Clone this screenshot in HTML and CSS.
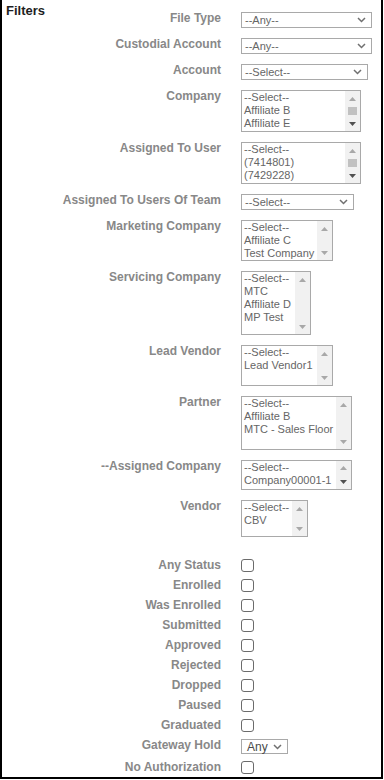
FILE: index.html
```html
<!DOCTYPE html>
<html lang="en">
<head>
    <meta charset="UTF-8">
    <meta name="viewport" content="width=device-width, initial-scale=1.0">
    <title>Filters</title>
    <link rel="stylesheet" href="styles.css">
</head>
<body>
<div class="panel">
    <h3 class="panel-title">Filters</h3>

    <div class="filter-grid">
        <label class="filter-label">File Type</label>
        <div class="dropdown dd-filetype"><span>--Any--</span><svg class="chevron" width="9" height="6" viewBox="0 0 9 6"><polyline points="1,1 4.5,4.5 8,1"/></svg></div>

        <label class="filter-label">Custodial Account</label>
        <div class="dropdown dd-custodial"><span>--Any--</span><svg class="chevron" width="9" height="6" viewBox="0 0 9 6"><polyline points="1,1 4.5,4.5 8,1"/></svg></div>

        <label class="filter-label">Account</label>
        <div class="dropdown dd-account"><span>--Select--</span><svg class="chevron" width="9" height="6" viewBox="0 0 9 6"><polyline points="1,1 4.5,4.5 8,1"/></svg></div>

        <label class="filter-label">Company</label>
        <div class="listbox lb-company">
            <ul><li>--Select--</li><li>Affiliate B</li><li>Affiliate E</li></ul>
            <div class="scrollbar">
                <span class="sb-btn"><svg width="7" height="4"><polygon points="0,4 3.5,0 7,4" class="off"/></svg></span>
                <span class="sb-track"><span class="sb-thumb"></span></span>
                <span class="sb-btn"><svg width="7" height="4"><polygon points="0,0 7,0 3.5,4" class="on"/></svg></span>
            </div>
        </div>

        <label class="filter-label">Assigned To User</label>
        <div class="listbox lb-user">
            <ul><li>--Select--</li><li>(7414801)</li><li>(7429228)</li></ul>
            <div class="scrollbar">
                <span class="sb-btn"><svg width="7" height="4"><polygon points="0,4 3.5,0 7,4" class="off"/></svg></span>
                <span class="sb-track"><span class="sb-thumb"></span></span>
                <span class="sb-btn"><svg width="7" height="4"><polygon points="0,0 7,0 3.5,4" class="on"/></svg></span>
            </div>
        </div>

        <label class="filter-label">Assigned To Users Of Team</label>
        <div class="dropdown dd-team"><span>--Select--</span><svg class="chevron" width="9" height="6" viewBox="0 0 9 6"><polyline points="1,1 4.5,4.5 8,1"/></svg></div>

        <label class="filter-label">Marketing Company</label>
        <div class="listbox lb-marketing">
            <ul><li>--Select--</li><li>Affiliate C</li><li>Test Company</li></ul>
            <div class="scrollbar">
                <span class="sb-btn"><svg width="7" height="4"><polygon points="0,4 3.5,0 7,4" class="off"/></svg></span>
                <span class="sb-track"></span>
                <span class="sb-btn"><svg width="7" height="4"><polygon points="0,0 7,0 3.5,4" class="off"/></svg></span>
            </div>
        </div>

        <label class="filter-label">Servicing Company</label>
        <div class="listbox lb-servicing">
            <ul><li>--Select--</li><li>MTC</li><li>Affiliate D</li><li>MP Test</li></ul>
            <div class="scrollbar">
                <span class="sb-btn"><svg width="7" height="4"><polygon points="0,4 3.5,0 7,4" class="off"/></svg></span>
                <span class="sb-track"></span>
                <span class="sb-btn"><svg width="7" height="4"><polygon points="0,0 7,0 3.5,4" class="off"/></svg></span>
            </div>
        </div>

        <label class="filter-label">Lead Vendor</label>
        <div class="listbox lb-leadvendor">
            <ul><li>--Select--</li><li>Lead Vendor1</li></ul>
            <div class="scrollbar">
                <span class="sb-btn"><svg width="7" height="4"><polygon points="0,4 3.5,0 7,4" class="off"/></svg></span>
                <span class="sb-track"></span>
                <span class="sb-btn"><svg width="7" height="4"><polygon points="0,0 7,0 3.5,4" class="off"/></svg></span>
            </div>
        </div>

        <label class="filter-label">Partner</label>
        <div class="listbox lb-partner">
            <ul><li>--Select--</li><li>Affiliate B</li><li>MTC - Sales Floor</li></ul>
            <div class="scrollbar">
                <span class="sb-btn"><svg width="7" height="4"><polygon points="0,4 3.5,0 7,4" class="off"/></svg></span>
                <span class="sb-track"></span>
                <span class="sb-btn"><svg width="7" height="4"><polygon points="0,0 7,0 3.5,4" class="off"/></svg></span>
            </div>
        </div>

        <label class="filter-label">--Assigned Company</label>
        <div class="listbox lb-assignedco">
            <ul><li>--Select--</li><li>Company00001-1</li></ul>
            <div class="scrollbar">
                <span class="sb-btn"><svg width="7" height="4"><polygon points="0,4 3.5,0 7,4" class="off"/></svg></span>
                <span class="sb-btn"><svg width="7" height="4"><polygon points="0,0 7,0 3.5,4" class="on"/></svg></span>
            </div>
        </div>

        <label class="filter-label">Vendor</label>
        <div class="listbox lb-vendor">
            <ul><li>--Select--</li><li>CBV</li></ul>
            <div class="scrollbar">
                <span class="sb-btn"><svg width="7" height="4"><polygon points="0,4 3.5,0 7,4" class="off"/></svg></span>
                <span class="sb-track"></span>
                <span class="sb-btn"><svg width="7" height="4"><polygon points="0,0 7,0 3.5,4" class="off"/></svg></span>
            </div>
        </div>
    </div>

    <div class="filter-grid status-grid">
        <label class="filter-label">Any Status</label><input type="checkbox">
        <label class="filter-label">Enrolled</label><input type="checkbox">
        <label class="filter-label">Was Enrolled</label><input type="checkbox">
        <label class="filter-label">Submitted</label><input type="checkbox">
        <label class="filter-label">Approved</label><input type="checkbox">
        <label class="filter-label">Rejected</label><input type="checkbox">
        <label class="filter-label">Dropped</label><input type="checkbox">
        <label class="filter-label">Paused</label><input type="checkbox">
        <label class="filter-label">Graduated</label><input type="checkbox">
        <label class="filter-label">Gateway Hold</label>
        <div class="dropdown dd-gateway"><span>Any</span><svg class="chevron" width="9" height="6" viewBox="0 0 9 6"><polyline points="1,1 4.5,4.5 8,1"/></svg></div>
        <label class="filter-label">No Authorization</label><input type="checkbox">
    </div>
</div>
</body>
</html>
```
FILE: styles.css
```css
body {
    margin: 0;
    font-family: "Liberation Sans", Arial, sans-serif;
    background-color: #ffffff;
}

.panel {
    width: 383px;
    box-sizing: border-box;
    border: 2px solid #000000;
    border-top: none;
    padding: 3px 0;
}

.panel-title {
    margin: 0 0 -6px 4px;
    font-size: 13px;
    line-height: 15px;
    color: #1e1e1e;
}

.filter-grid {
    display: grid;
    grid-template-columns: 219px auto;
    column-gap: 20px;
    row-gap: 10px;
    align-items: start;
    justify-items: start;
}

.filter-label {
    justify-self: end;
    font-size: 12px;
    font-weight: bold;
    line-height: 13px;
    color: #888888;
    white-space: nowrap;
}

.status-grid {
    margin-top: 22px;
    row-gap: 7px;
}

.status-grid input[type="checkbox"] {
    -webkit-appearance: none;
    appearance: none;
    width: 13px;
    height: 13px;
    margin: 0;
    border: 1px solid #6b6b6b;
    border-radius: 3px;
    background-color: #ffffff;
}

/* dropdowns */
.dropdown {
    display: flex;
    align-items: center;
    justify-content: space-between;
    box-sizing: border-box;
    height: 16px;
    padding: 0 5px 0 3px;
    border: 1px solid #a9a9a9;
    background-color: #ffffff;
    font-size: 11px;
    color: #666666;
}

.chevron polyline {
    fill: none;
    stroke: #707070;
    stroke-width: 1.5;
}

.dd-filetype, .dd-custodial { width: 131px; }
.dd-account { width: 127px; }
.dd-team { width: 113px; }
.dd-gateway {
    width: 47px;
    height: 15px;
    padding-left: 5px;
    font-size: 12px;
    color: #4a4a4a;
}

/* list boxes */
.listbox {
    display: flex;
    box-sizing: border-box;
    border: 1px solid #a9a9a9;
    background-color: #ffffff;
    overflow: hidden;
}

.listbox ul {
    flex: 1;
    min-width: 0;
    list-style: none;
    margin: 0;
    padding: 0 0 0 2px;
    font-size: 11px;
    line-height: 13px;
    color: #666666;
    white-space: nowrap;
    overflow: hidden;
}

.scrollbar {
    flex: none;
    width: 15px;
    display: flex;
    flex-direction: column;
    background-color: #f1f1f1;
}

.sb-btn {
    height: 15px;
    display: flex;
    align-items: center;
    justify-content: center;
}

.sb-track {
    flex: 1;
    min-height: 0;
}

.sb-thumb {
    display: block;
    height: 8px;
    margin: 1px 3px 0;
    background-color: #c1c1c1;
}

.off { fill: #a8a8a8; }
.on { fill: #505050; }

.lb-company, .lb-user { width: 120px; height: 42px; }
.lb-marketing { width: 92px; height: 41px; }
.lb-servicing { width: 70px; height: 64px; }
.lb-leadvendor { width: 92px; height: 41px; }
.lb-partner { width: 111px; height: 54px; }
.lb-assignedco { width: 111px; height: 30px; }
.lb-vendor { width: 67px; height: 37px; }
```
